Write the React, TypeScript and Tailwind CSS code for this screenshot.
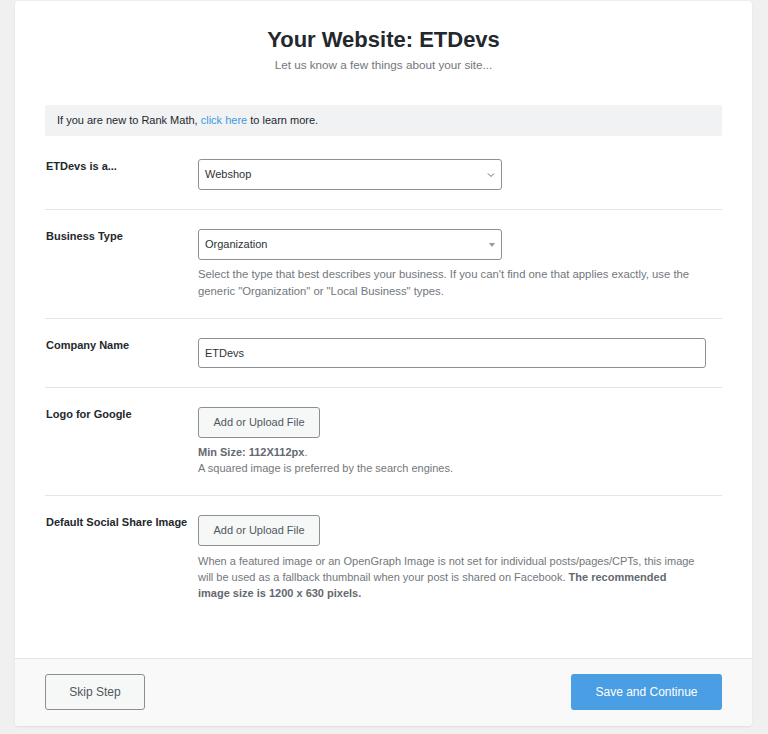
import React from "react";

const font = { fontFamily: '"Liberation Sans", Arial, sans-serif' };

function Row({
  label,
  children,
  first,
  last,
  pb = "pb-[19px]",
}: {
  label: string;
  children: React.ReactNode;
  first?: boolean;
  last?: boolean;
  pb?: string;
}) {
  return (
    <div
      className={`flex ${first ? "pt-[23px]" : "pt-[19px]"} ${
        last ? "" : `${pb} border-b border-[#e5e5e5]`
      }`}
    >
      <div className="w-[153px] shrink-0 pl-[1px] text-[11px] leading-[15px] font-bold text-[#23282d]">
        {label}
      </div>
      <div className="flex-1">{children}</div>
    </div>
  );
}

function UploadButton() {
  return (
    <button className="h-[31px] w-[122px] rounded-[3px] border border-[#8c8f94] bg-[#f6f7f7] text-[11px] text-[#50575e]">
      Add or Upload File
    </button>
  );
}

export default function App() {
  return (
    <div className="min-h-[734px] bg-[#f0f0f1] pt-[1px]" style={font}>
      <div className="mx-[15px] w-[737px] rounded-[4px] bg-white shadow-[0_1px_2px_rgba(0,0,0,0.08)] overflow-hidden">
        <div className="px-[30px] pt-[25px] pb-[57px]">
          <h1 className="text-center text-[22px] leading-[28px] font-bold text-[#23282d]">
            Your Website: ETDevs
          </h1>
          <p className="mt-[3px] text-center text-[11.7px] leading-[16px] text-[#72777c]">
            Let us know a few things about your site...
          </p>
          <div className="mt-[32px] h-[31px] flex items-center rounded-[2px] bg-[#f1f2f4] px-[12px] text-[11px] text-[#23282d]">
            <span>
              If you are new to Rank Math,{" "}
              <span className="text-[#3e98e0]">click here</span> to learn more.
            </span>
          </div>

          <Row label="ETDevs is a..." first>
            <div className="relative h-[31px] w-[304px] rounded-[3px] border border-[#8c8f94] flex items-center pl-[6px] text-[11px] text-[#2c3338]">
              Webshop
              <svg
                className="absolute right-[6px] top-[12px]"
                width="8"
                height="6"
                viewBox="0 0 8 6"
                fill="none"
              >
                <polyline
                  points="1,1.5 4,4.5 7,1.5"
                  stroke="#646970"
                  strokeWidth="1"
                />
              </svg>
            </div>
          </Row>

          <Row label="Business Type" pb="pb-[18px]">
            <div className="relative h-[31px] w-[304px] rounded-[3px] border border-[#8c8f94] flex items-center pl-[6px] text-[11px] text-[#2c3338]">
              Organization
              <svg
                className="absolute right-[6px] top-[13px]"
                width="6"
                height="4"
                viewBox="0 0 6 4"
              >
                <polygon points="0,0 6,0 3,4" fill="#999" />
              </svg>
            </div>
            <p className="mt-[6px] text-[11.3px] leading-[17px] text-[#72777c] pr-[24px]">
              Select the type that best describes your business. If you can't
              find one that applies exactly, use the generic "Organization" or
              "Local Business" types.
            </p>
          </Row>

          <Row label="Company Name">
            <div className="h-[30px] w-[508px] rounded-[3px] border border-[#8c8f94] flex items-center pl-[6px] text-[11px] text-[#2c3338]">
              ETDevs
            </div>
          </Row>

          <Row label="Logo for Google">
            <UploadButton />
            <p className="mt-[6px] text-[11px] leading-[16px] text-[#72777c]">
              <span className="font-bold text-[#646970]">
                Min Size: 112X112px
              </span>
              .
              <br />
              A squared image is preferred by the search engines.
            </p>
          </Row>

          <Row label="Default Social Share Image" last>
            <UploadButton />
            <p className="mt-[7px] text-[11px] leading-[16px] text-[#72777c] pr-[26px]">
              When a featured image or an OpenGraph Image is not set for
              individual posts/pages/CPTs, this image will be used as a fallback
              thumbnail when your post is shared on Facebook.{" "}
              <span className="font-bold text-[#646970]">
                The recommended image size is 1200 x 630 pixels.
              </span>
            </p>
          </Row>
        </div>

        <div className="flex items-center justify-between border-t border-[#e2e4e7] bg-[#f9f9f9] px-[30px] pt-[15px] pb-[16px]">
          <button className="h-[36px] w-[100px] rounded-[3px] border border-[#8c8f94] bg-[#f6f7f7] text-[12px] text-[#50575e]">
            Skip Step
          </button>
          <button className="h-[36px] w-[151px] rounded-[3px] bg-[#4a9ee4] text-[12px] text-white">
            Save and Continue
          </button>
        </div>
      </div>
    </div>
  );
}
